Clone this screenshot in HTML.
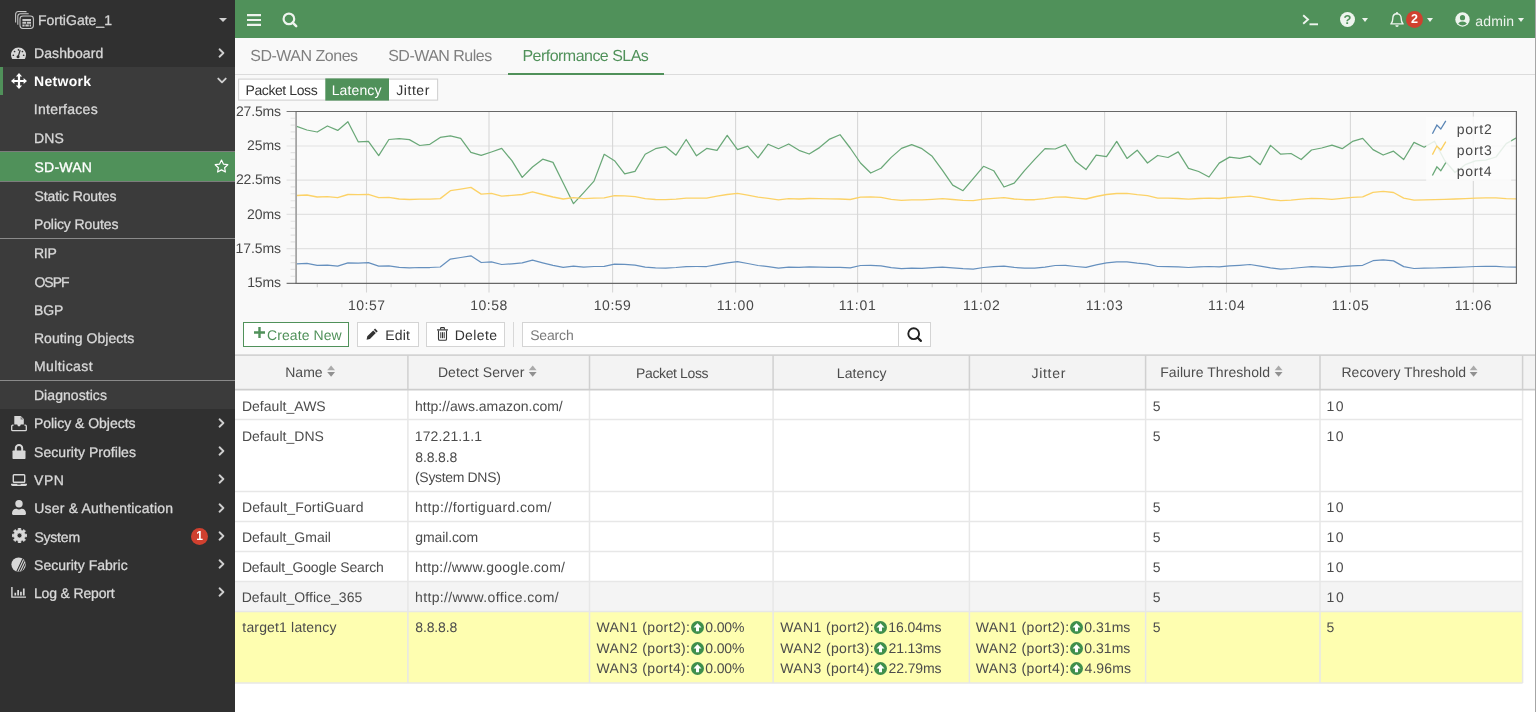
<!DOCTYPE html>
<html lang="en">
<head>
<meta charset="utf-8">
<title>FortiGate_1 - Performance SLAs</title>
<style>
*{box-sizing:border-box;margin:0;padding:0}
html,body{width:1536px;height:712px;overflow:hidden;background:#fff}
body{font-family:"Liberation Sans",sans-serif;font-size:14px;color:#444;position:relative}
svg{display:block}
#side{position:absolute;left:0;top:0;width:235px;height:712px;background:#303030;color:#d8d8d8}
#side .it{position:absolute;left:0;width:235px;height:28px;line-height:28px;white-space:nowrap}
#side .it .tx{position:absolute;left:35px;top:0}
#side .it .ic{position:absolute}
#side .it .ch{position:absolute;left:218.4px;top:8.5px}
#hdr{position:absolute;left:235px;top:0;width:1301px;height:38px;background:#50915a;color:#fff}
#hdr .a{position:absolute;display:block}
#tabs{position:absolute;left:235px;top:38px;width:1301px;height:37px;background:#f9f9f9;border-bottom:1px solid #dcdcdc;font-size:16px;color:#6e6e6e}
#tabs span{position:absolute;top:0;line-height:35px;white-space:nowrap}
#main{position:absolute;left:235px;top:75px;width:1301px;height:637px;background:#f9f9f9}
.btn{position:absolute;top:322px;height:25px;border:1px solid #d4d4d4;background:#fff;line-height:24px;font-size:14px;color:#333;white-space:nowrap}





.t{text-rendering:geometricPrecision;position:absolute;white-space:pre;line-height:20px;height:20px;font-size:14px;color:#4c4c4c}
#txt{position:absolute;left:0;top:0;width:1536px;height:712px;will-change:transform}

</style>
</head>
<body>
<div id="side">
<div class="it" style="top:6px"><span class="ic" style="left:15px;top:5px"><svg width="19" height="18" viewBox="0 0 19 18" style=""><g fill="none" stroke="#c8c8c8" stroke-width="1.050"><path d="M.6 11.5V3.4C.6 1.7 1.7.6 3.4.6H11.5"/><path d="M2.8 13.7V5.6c0-1.7 1.1-2.8 2.8-2.8h8.1"/><rect x="5" y="5" width="13.4" height="12.4" rx="2.9"/></g><path fill="#c8c8c8" d="M7.4 8h8.6v2H7.4zM7.4 10.8h3.8v2H7.4zM12 10.8h4v2h-4zM7.4 13.6h2.2v1.8H7.4zM10.4 13.6h3.4v1.8h-3.4zM14.6 13.6h1.4v1.8h-1.4z"/></svg></span><span style="position:absolute;left:219px;top:12px;border:4px solid transparent;border-top:4.5px solid #d0d0d0;border-bottom:0"></span></div>
<div style="position:absolute;left:0;top:67px;width:235px;height:342px;background:#3b3b3b"></div>
<div style="position:absolute;left:0;top:67px;width:3px;height:28px;background:#50915a"></div>
<div style="position:absolute;left:0;top:151px;width:235px;height:31px;background:#50915a;border-top:1px solid #7c7c7c;border-bottom:1px solid #7c7c7c"></div>
<div style="position:absolute;left:0;top:238px;width:235px;height:1px;background:#8a8a8a"></div>
<div style="position:absolute;left:0;top:380px;width:235px;height:1px;background:#8a8a8a"></div>
<div class="it" style="top:39px;"><span class="ic" style="left:11.2px;top:7.8px"><svg width="15" height="12.2" viewBox="0 0 16 13" style=""><path fill="#d8d8d8" d="M8 .5C3.6.5 0 4 0 8.3c0 1.5.4 2.9 1.1 4.1.2.3.5.4.800.4h12.2c.3 0 .6-.1.8-.4.7-1.2 1.1-2.6 1.1-4.1C16 4 12.4.5 8 .5z"/><circle cx="8" cy="3" r=".9" fill="#303030"/><circle cx="3.8" cy="4.8" r=".9" fill="#303030"/><circle cx="2.5" cy="8.8" r=".9" fill="#303030"/><circle cx="13.5" cy="8.8" r=".9" fill="#303030"/><circle cx="12.2" cy="4.8" r=".9" fill="#303030"/><path d="M7.6 10.5L9.6 3.8" stroke="#303030" stroke-width="1.3" stroke-linecap="round"/><circle cx="7.5" cy="10.3" r="1.6" fill="#303030"/></svg></span><span class="ch"><svg width="7.3" height="10" viewBox="0 0 8 11" style=""><path d="M1.7 1.4L5.9 5.5L1.7 9.6" fill="none" stroke="#d0d0d0" stroke-width="2" stroke-linecap="round" stroke-linejoin="round"/></svg></span></div>
<div class="it" style="top:67px;color:#fff;"><span class="ic" style="left:11px;top:6px"><svg width="16" height="16" viewBox="0 0 16 16" style=""><path fill="#fff" d="M8 0l3.1 3.4H9.1v3.5h3.5V4.9L16 8l-3.4 3.1V9.1H9.1v3.5h2L8 16l-3.1-3.4h2V9.1H3.4v2L0 8l3.4-3.1v2h3.5V3.4h-2z"/></svg></span><span class="ch" style="left:217.1px;top:9.7px"><svg width="10" height="7.3" viewBox="0 0 11 8" style=""><path d="M1.4 1.7L5.5 5.9L9.6 1.7" fill="none" stroke="#d0d0d0" stroke-width="2" stroke-linecap="round" stroke-linejoin="round"/></svg></span></div>
<div class="it" style="top:95.5px;"></div>
<div class="it" style="top:123.5px;"></div>
<div class="it" style="top:152px;color:#fff;"><span class="ch" style="left:214px;top:7px"><svg width="15" height="14" viewBox="0 0 15 14" style=""><path d="M7.5 1.1l1.9 4 4.4.6-3.2 3 .8 4.3-3.9-2.1-3.9 2.1.8-4.3-3.2-3 4.4-.6z" fill="none" stroke="#fff" stroke-width="1.2" stroke-linejoin="round"/></svg></span></div>
<div class="it" style="top:182px;"></div>
<div class="it" style="top:210px;"></div>
<div class="it" style="top:239px;"></div>
<div class="it" style="top:267px;"></div>
<div class="it" style="top:295.5px;"></div>
<div class="it" style="top:324px;"></div>
<div class="it" style="top:352px;"></div>
<div class="it" style="top:381px;"></div>
<div class="it" style="top:409px;"><span class="ic" style="left:11px;top:6.8px"><svg width="16" height="16" viewBox="0 0 16 16" style=""><path fill="#d8d8d8" d="M3.3 0h6.5l3 3v5.5h-3l-.8 1.7H7l-.8-1.7H3.3z"/><path fill="#303030" d="M9.6.6v2.8h2.8z" opacity=".55"/><path fill="none" stroke="#d8d8d8" stroke-width="1.3" d="M2.6 9.2H1.7c-.6 0-1 .4-1 1v3.5c0 .6.4 1 1 1h12.6c.6 0 1-.4 1-1v-3.5c0-.6-.4-1-1-1h-.9"/></svg></span><span class="ch"><svg width="7.3" height="10" viewBox="0 0 8 11" style=""><path d="M1.7 1.4L5.9 5.5L1.7 9.6" fill="none" stroke="#d0d0d0" stroke-width="2" stroke-linecap="round" stroke-linejoin="round"/></svg></span></div>
<div class="it" style="top:437.5px;"><span class="ic" style="left:12px;top:6px"><svg width="14" height="15" viewBox="0 0 14 15" style=""><path fill="#d8d8d8" d="M1.2 6.5h11.6c.4 0 .7.3.7.7v7c0 .4-.3.7-.7.7H1.2c-.4 0-.7-.3-.7-.7v-7c0-.4.3-.7.7-.7z"/><path fill="none" stroke="#d8d8d8" stroke-width="2" d="M3.8 7V4.3a3.2 3.2 0 016.4 0V7"/></svg></span><span class="ch"><svg width="7.3" height="10" viewBox="0 0 8 11" style=""><path d="M1.7 1.4L5.9 5.5L1.7 9.6" fill="none" stroke="#d0d0d0" stroke-width="2" stroke-linecap="round" stroke-linejoin="round"/></svg></span></div>
<div class="it" style="top:465.5px;"><span class="ic" style="left:11px;top:8px"><svg width="16" height="12" viewBox="0 0 16 12" style=""><rect x="2.3" y=".7" width="11.4" height="7.6" rx=".8" fill="none" stroke="#d8d8d8" stroke-width="1.4"/><path fill="#d8d8d8" d="M0 9.8h16v.7c0 .8-.7 1.4-1.5 1.4h-13C.7 11.9 0 11.3 0 10.5z"/><rect x="6.3" y="9.8" width="3.4" height=".8" fill="#303030"/></svg></span><span class="ch"><svg width="7.3" height="10" viewBox="0 0 8 11" style=""><path d="M1.7 1.4L5.9 5.5L1.7 9.6" fill="none" stroke="#d0d0d0" stroke-width="2" stroke-linecap="round" stroke-linejoin="round"/></svg></span></div>
<div class="it" style="top:494px;"><span class="ic" style="left:12px;top:6px"><svg width="14" height="15" viewBox="0 0 14 15" style=""><circle cx="7" cy="3.7" r="3.7" fill="#d8d8d8"/><path fill="#d8d8d8" d="M0 13.5c0-3 1.8-4.7 4.2-4.7h.4c.7.4 1.5.6 2.4.6s1.7-.2 2.4-.6h.4c2.4 0 4.2 1.7 4.2 4.7 0 .8-.6 1.5-1.5 1.5h-11C.6 15 0 14.3 0 13.5z"/></svg></span><span class="ch"><svg width="7.3" height="10" viewBox="0 0 8 11" style=""><path d="M1.7 1.4L5.9 5.5L1.7 9.6" fill="none" stroke="#d0d0d0" stroke-width="2" stroke-linecap="round" stroke-linejoin="round"/></svg></span></div>
<div class="it" style="top:522px;"><span class="ic" style="left:11.5px;top:6px"><svg width="15" height="15" viewBox="0 0 15 15" style=""><path fill="#d8d8d8" stroke="#d8d8d8" stroke-width=".6" stroke-linejoin="round" fill-rule="evenodd" d="M6.17 1.96L6.27 0.10L8.73 0.10L8.83 1.96L10.48 2.64L11.86 1.40L13.60 3.14L12.36 4.52L13.04 6.17L14.90 6.27L14.90 8.73L13.04 8.83L12.36 10.48L13.60 11.86L11.86 13.60L10.48 12.36L8.83 13.04L8.73 14.90L6.27 14.90L6.17 13.04L4.52 12.36L3.14 13.60L1.40 11.86L2.64 10.48L1.96 8.83L0.10 8.73L0.10 6.27L1.96 6.17L2.64 4.52L1.40 3.14L3.14 1.40L4.52 2.64Z M7.5 5.1a2.4 2.4 0 100 4.8a2.4 2.4 0 000-4.8z"/></svg></span><span class="ch"><svg width="7.3" height="10" viewBox="0 0 8 11" style=""><path d="M1.7 1.4L5.9 5.5L1.7 9.6" fill="none" stroke="#d0d0d0" stroke-width="2" stroke-linecap="round" stroke-linejoin="round"/></svg></span><span style="position:absolute;left:191px;top:5.5px;width:17px;height:17px;border-radius:9px;will-change:transform;background:#d0402f;color:#fff;font-weight:bold;font-size:12px;line-height:17px;text-align:center">1</span></div>
<div class="it" style="top:550px;"><span class="ic" style="left:11.2px;top:7px"><svg width="15.2" height="15.2" viewBox="0 0 16 16" style=""><defs><clipPath id="fc"><circle cx="8" cy="8" r="7.6"/></clipPath></defs><circle cx="8" cy="8" r="7.6" fill="#d8d8d8"/><g clip-path="url(#fc)" stroke="#303030" stroke-width="1.1"><path d="M5.5 16.5L12.5 1.5M8 16.5L15 1.5M10.5 16.5L17.5 1.5"/></g></svg></span><span class="ch"><svg width="7.3" height="10" viewBox="0 0 8 11" style=""><path d="M1.7 1.4L5.9 5.5L1.7 9.6" fill="none" stroke="#d0d0d0" stroke-width="2" stroke-linecap="round" stroke-linejoin="round"/></svg></span></div>
<div class="it" style="top:578.5px;"><span class="ic" style="left:11px;top:8px"><svg width="15.4" height="11.3" viewBox="0 0 16 12" style=""><path fill="none" stroke="#d8d8d8" stroke-width="1.5" d="M.8 0v10.8H16"/><path fill="#d8d8d8" d="M3.5 6h1.8v3H3.5zM6.5 3.3h1.8V9H6.5zM9.5 5h1.8v4H9.5zM12.5 1.5h1.8V9h-1.8z"/></svg></span><span class="ch"><svg width="7.3" height="10" viewBox="0 0 8 11" style=""><path d="M1.7 1.4L5.9 5.5L1.7 9.6" fill="none" stroke="#d0d0d0" stroke-width="2" stroke-linecap="round" stroke-linejoin="round"/></svg></span></div>
</div>
<div id="hdr">
<span class="a" style="left:12px;top:14px"><svg width="14" height="12" viewBox="0 0 14 12" style=""><path d="M0 1.2h14M0 6h14M0 10.8h14" stroke="#eef4ee" stroke-width="2.2"/></svg></span>
<span class="a" style="left:47.10000000000002px;top:11.5px"><svg width="16" height="16" viewBox="0 0 16 16" style=""><circle cx="6.9" cy="6.9" r="5.3" fill="none" stroke="#eef4ee" stroke-width="2.2"/><path d="M10.7 10.7L14.2 14.2" stroke="#eef4ee" stroke-width="2.5" stroke-linecap="round"/></svg></span>
<span class="a" style="left:1067px;top:14px"><svg width="17" height="12" viewBox="0 0 17 12" style=""><path d="M1.2 1.2L6 5.5L1.2 9.8" fill="none" stroke="#eef4ee" stroke-width="1.9"/><path d="M7.5 10.3H16" stroke="#eef4ee" stroke-width="1.9"/></svg></span>
<span class="a" style="left:1105.3px;top:12.3px"><span style="display:block;width:15px;height:15px;border-radius:8px;will-change:transform;background:#eef4ee;color:#50915a;font-weight:bold;font-size:13px;line-height:15.5px;text-align:center">?</span></span>
<span class="a" style="left:1126.5px;top:18px"><span style="display:block;border:3.5px solid transparent;border-top:4px solid #eef4ee;border-bottom:0"></span></span>
<span class="a" style="left:1154.5px;top:11.5px"><svg width="14" height="16" viewBox="0 0 14 16" style=""><path d="M7 1.8c-2.6 0-4.2 2-4.2 4.6 0 3.3-1 4.6-1.9 5.5h12.2c-.9-.9-1.9-2.2-1.9-5.5 0-2.6-1.6-4.6-4.2-4.6z" fill="none" stroke="#eef4ee" stroke-width="1.4" stroke-linejoin="round"/><path d="M7 .3v1.5" stroke="#eef4ee" stroke-width="1.6" stroke-linecap="round"/><path d="M5.3 13.3a1.7 1.7 0 003.4 0z" fill="#eef4ee"/></svg></span>
<span class="a" style="left:1170.5px;top:11.2px"><span style="display:block;width:17px;height:17px;border-radius:9px;will-change:transform;background:#d0402f;color:#fff;font-weight:bold;font-size:12.5px;line-height:17px;text-align:center">2</span></span>
<span class="a" style="left:1192px;top:18px"><span style="display:block;border:3.5px solid transparent;border-top:4px solid #eef4ee;border-bottom:0"></span></span>
<span class="a" style="left:1220px;top:12.3px"><svg width="15" height="15" viewBox="0 0 15 15" style=""><defs><clipPath id="uc"><circle cx="7.5" cy="7.5" r="5.9"/></clipPath></defs><circle cx="7.5" cy="7.5" r="7.2" fill="#eef4ee"/><circle cx="7.5" cy="5.7" r="2.6" fill="#50915a"/><ellipse cx="7.5" cy="13.2" rx="4.7" ry="3.7" fill="#50915a" clip-path="url(#uc)"/></svg></span>
<span class="a" style="left:1283.3px;top:18px"><span style="display:block;border:3.5px solid transparent;border-top:4px solid #eef4ee;border-bottom:0"></span></span>
</div>
<div id="tabs">
<div style="position:absolute;left:272.5px;top:35px;width:156px;height:2px;background:#50915a"></div>
</div>
<div id="main"></div>
<svg width="210" height="30" viewBox="235 75 210 30" style="position:absolute;left:235px;top:75px"><rect x="238.6" y="79.1" width="199" height="21" fill="#fff" stroke="#d2d2d2" stroke-width="1.1"/><rect x="325.3" y="78.4" width="63.7" height="22.2" fill="#50915a"/></svg>
<svg id="chart" width="1301" height="215" viewBox="235 100 1301 215" style="position:absolute;left:235px;top:100px;font-family:'Liberation Sans',sans-serif;font-size:14px">
<rect x="296.0" y="111.3" width="1220.6" height="171.9" fill="#fafafa"/>
<path d="M290.6 118.2h4.6M290.6 125.1h4.6M290.6 131.9h4.6M290.6 138.8h4.6M290.6 152.6h4.6M290.6 159.4h4.6M290.6 166.3h4.6M290.6 173.2h4.6M290.6 186.9h4.6M290.6 193.8h4.6M290.6 200.7h4.6M290.6 207.6h4.6M290.6 221.3h4.6M290.6 228.2h4.6M290.6 235.1h4.6M290.6 241.9h4.6M290.6 255.7h4.6M290.6 262.6h4.6M290.6 269.4h4.6M290.6 276.3h4.6" stroke="#e2e2e2" stroke-width="1.1" fill="none"/>
<path d="M286.6 146.0H1516.6M286.6 180.2H1516.6M286.6 214.4H1516.6M286.6 248.6H1516.6" stroke="#e2e2e2" stroke-width="1.2" fill="none"/>
<path d="M366.5 111.3V292.5M489.0 111.3V292.5M612.6 111.3V292.5M735.6 111.3V292.5M857.6 111.3V292.5M981.5 111.3V292.5M1104.6 111.3V292.5M1226.5 111.3V292.5M1350.4 111.3V292.5M1473.3 111.3V292.5" stroke="#d6d6d6" stroke-width="1.05" fill="none"/>
<path d="M317.3 283.2v4M341.9 283.2v4M391.1 283.2v4M415.7 283.2v4M440.3 283.2v4M464.9 283.2v4M514.1 283.2v4M538.7 283.2v4M563.3 283.2v4M587.9 283.2v4M637.1 283.2v4M661.7 283.2v4M686.2 283.2v4M710.8 283.2v4M760.0 283.2v4M784.6 283.2v4M809.2 283.2v4M833.8 283.2v4M883.0 283.2v4M907.6 283.2v4M932.2 283.2v4M956.8 283.2v4M1006.0 283.2v4M1030.6 283.2v4M1055.2 283.2v4M1079.8 283.2v4M1129.0 283.2v4M1153.6 283.2v4M1178.2 283.2v4M1202.8 283.2v4M1252.0 283.2v4M1276.6 283.2v4M1301.1 283.2v4M1325.7 283.2v4M1374.9 283.2v4M1399.5 283.2v4M1424.1 283.2v4M1448.7 283.2v4M1497.9 283.2v4" stroke="#d0d0d0" stroke-width="1.1" fill="none"/>
<polyline points="296.7,126.3 306.9,130.0 317.2,132.0 327.4,126.0 337.7,130.4 347.9,121.7 358.2,141.8 368.4,141.4 378.7,155.6 388.9,139.5 399.2,138.7 409.4,139.6 419.7,145.5 429.9,144.3 440.2,137.4 450.4,135.8 460.7,138.4 470.9,152.3 481.2,155.4 491.4,152.0 501.7,148.4 511.9,160.7 522.2,177.4 532.5,167.0 542.7,159.2 553.0,162.4 563.2,183.0 573.5,203.7 583.7,192.7 594.0,181.1 604.2,154.3 614.5,160.7 624.7,173.9 635.0,171.4 645.2,154.3 655.5,148.7 665.7,146.7 676.0,155.2 686.2,139.5 696.5,155.8 706.7,148.4 717.0,150.3 727.2,135.3 737.5,149.6 747.7,146.2 758.0,157.9 768.2,144.2 778.5,148.7 788.7,144.0 799.0,150.3 809.2,154.0 819.5,147.6 829.7,139.1 840.0,134.7 850.2,148.0 860.5,163.0 870.7,173.0 881.0,168.2 891.2,157.4 901.5,148.4 911.7,144.6 922.0,148.7 932.2,156.3 942.5,170.4 952.7,185.1 963.0,190.7 973.2,178.7 983.5,166.3 993.7,170.7 1004.0,187.0 1014.2,183.1 1024.5,170.7 1034.7,159.4 1045.0,148.6 1055.2,149.0 1065.5,144.7 1075.7,161.6 1086.0,169.6 1096.2,155.2 1106.5,156.7 1116.7,141.4 1127.0,158.4 1137.2,150.2 1147.5,163.0 1157.7,155.5 1168.0,157.5 1178.2,151.9 1188.5,168.3 1198.7,171.5 1209.0,177.0 1219.2,163.1 1229.5,157.1 1239.7,158.4 1250.0,156.2 1260.2,164.7 1270.5,145.4 1280.7,154.2 1291.0,153.5 1301.2,159.5 1311.5,150.0 1321.7,148.0 1332.0,145.2 1342.2,148.7 1352.5,141.4 1362.7,138.4 1373.0,149.6 1383.2,155.0 1393.5,151.2 1403.7,159.5 1414.0,142.4 1424.2,147.2 1434.5,141.2 1444.7,160.5 1455.0,172.5 1465.2,164.7 1475.5,160.9 1485.7,160.2 1496.0,157.0 1506.2,143.6 1516.5,137.7" fill="none" stroke="#6aa878" stroke-width="1.25" stroke-linejoin="round"/>
<polyline points="296.7,195.5 306.9,195.0 317.2,197.0 327.4,196.7 337.7,197.7 347.9,194.5 358.2,194.7 368.4,194.3 378.7,197.7 388.9,197.4 399.2,199.0 409.4,199.5 419.7,199.1 429.9,199.1 440.2,198.6 450.4,190.7 460.7,189.1 470.9,187.4 481.2,194.1 491.4,193.4 501.7,196.1 511.9,195.4 522.2,194.5 532.5,191.8 542.7,194.5 553.0,197.0 563.2,199.0 573.5,197.7 583.7,198.7 594.0,198.1 604.2,197.9 614.5,195.7 624.7,195.9 635.0,196.7 645.2,198.7 655.5,199.5 665.7,199.7 676.0,199.1 686.2,198.2 696.5,198.1 706.7,198.1 717.0,196.2 727.2,194.5 737.5,193.3 747.7,195.1 758.0,197.1 768.2,198.3 778.5,199.8 788.7,198.7 799.0,199.0 809.2,198.5 819.5,198.7 829.7,198.9 840.0,199.0 850.2,199.5 860.5,197.1 870.7,196.9 881.0,197.4 891.2,199.3 901.5,200.3 911.7,199.8 922.0,199.9 932.2,199.3 942.5,198.7 952.7,199.5 963.0,200.3 973.2,200.7 983.5,199.1 993.7,198.3 1004.0,197.7 1014.2,199.0 1024.5,199.7 1034.7,199.7 1045.0,198.7 1055.2,197.1 1065.5,197.0 1075.7,198.1 1086.0,199.0 1096.2,196.5 1106.5,194.5 1116.7,193.5 1127.0,193.4 1137.2,194.7 1147.5,195.7 1157.7,198.1 1168.0,198.2 1178.2,198.5 1188.5,199.1 1198.7,198.5 1209.0,198.1 1219.2,198.5 1229.5,197.5 1239.7,196.9 1250.0,196.1 1260.2,197.7 1270.5,199.5 1280.7,200.7 1291.0,200.1 1301.2,199.1 1311.5,198.3 1321.7,198.7 1332.0,199.3 1342.2,198.3 1352.5,197.4 1362.7,196.9 1373.0,192.3 1383.2,191.4 1393.5,192.5 1403.7,198.2 1414.0,200.1 1424.2,199.8 1434.5,199.6 1444.7,199.3 1455.0,199.0 1465.2,198.6 1475.5,198.1 1485.7,197.9 1496.0,197.9 1506.2,198.6 1516.5,198.8" fill="none" stroke="#fcd267" stroke-width="1.35" stroke-linejoin="round"/>
<polyline points="296.7,263.9 306.9,263.4 317.2,265.4 327.4,265.1 337.7,266.1 347.9,262.9 358.2,263.1 368.4,262.7 378.7,266.1 388.9,265.8 399.2,267.4 409.4,267.9 419.7,267.5 429.9,267.5 440.2,267.0 450.4,259.1 460.7,257.5 470.9,255.8 481.2,262.5 491.4,261.8 501.7,264.5 511.9,263.8 522.2,262.9 532.5,260.2 542.7,262.9 553.0,265.4 563.2,267.4 573.5,266.1 583.7,267.1 594.0,266.5 604.2,266.3 614.5,264.1 624.7,264.3 635.0,265.1 645.2,267.1 655.5,267.9 665.7,268.1 676.0,267.5 686.2,266.6 696.5,266.5 706.7,266.5 717.0,264.6 727.2,262.9 737.5,261.7 747.7,263.5 758.0,265.5 768.2,266.7 778.5,268.2 788.7,267.1 799.0,267.4 809.2,266.9 819.5,267.1 829.7,267.3 840.0,267.4 850.2,267.9 860.5,265.5 870.7,265.3 881.0,265.8 891.2,267.7 901.5,268.7 911.7,268.2 922.0,268.3 932.2,267.7 942.5,267.1 952.7,267.9 963.0,268.7 973.2,269.1 983.5,267.5 993.7,266.7 1004.0,266.1 1014.2,267.4 1024.5,268.1 1034.7,268.1 1045.0,267.1 1055.2,265.5 1065.5,265.4 1075.7,266.5 1086.0,267.4 1096.2,264.9 1106.5,262.9 1116.7,261.9 1127.0,261.8 1137.2,263.1 1147.5,264.1 1157.7,266.5 1168.0,266.6 1178.2,266.9 1188.5,267.5 1198.7,266.9 1209.0,266.5 1219.2,266.9 1229.5,265.9 1239.7,265.3 1250.0,264.5 1260.2,266.1 1270.5,267.9 1280.7,269.1 1291.0,268.5 1301.2,267.5 1311.5,266.7 1321.7,267.1 1332.0,267.7 1342.2,266.7 1352.5,265.8 1362.7,265.3 1373.0,260.7 1383.2,259.8 1393.5,260.9 1403.7,266.6 1414.0,268.5 1424.2,268.2 1434.5,268.0 1444.7,267.7 1455.0,267.4 1465.2,267.0 1475.5,266.5 1485.7,266.3 1496.0,266.3 1506.2,267.0 1516.5,267.2" fill="none" stroke="#6690be" stroke-width="1.25" stroke-linejoin="round"/>
<path d="M286.6 111.5H296.0M286.6 283.4H296.0" stroke="#777" stroke-width="1.1" fill="none"/>
<path d="M296.1 111.3V283.2" stroke="#a0a0a0" stroke-width="1.7" fill="none"/>
<path d="M295.2 111.5H1516.4V283.4H295.2" stroke="#676767" stroke-width="1.15" fill="none"/>
<rect x="1426.2" y="116.5" width="85" height="64.5" fill="#fcfcfc" fill-opacity="0.85"/>
<path d="M1432.4 133.7L1436.9 125.1L1440.8 129.0L1445.8 120.8" stroke="#5b86b5" stroke-width="1.3" fill="none"/>
<path d="M1432.4 154.6L1436.9 146.0L1440.8 149.9L1445.8 141.7" stroke="#fbcf5e" stroke-width="1.3" fill="none"/>
<path d="M1432.4 175.5L1436.9 166.9L1440.8 170.8L1445.8 162.6" stroke="#6aa878" stroke-width="1.3" fill="none"/>
</svg>
<div class="btn" style="left:243px;width:106px;border-color:#50915a;color:#50915a"><span style="position:absolute;left:9.6px;top:4.3px"><svg width="11" height="11" viewBox="0 0 12 12" style=""><path d="M6 0v12M0 6h12" stroke="#50915a" stroke-width="2.6"/></svg></span></div>
<div class="btn" style="left:357px;width:61.5px"><span style="position:absolute;left:8.3px;top:5px"><svg width="12.5" height="12" viewBox="0 0 14 14" style=""><path fill="#333" d="M10.3.6l3.1 3.1-1.5 1.5-3.1-3.1zM8.1 2.8l3.1 3.1-6.9 6.9-3.9.8.8-3.9z"/></svg></span></div>
<div class="btn" style="left:425.5px;width:79px"><span style="position:absolute;left:10.2px;top:3.6px"><svg width="11" height="14" viewBox="0 0 11 14" style=""><path fill="none" stroke="#333" stroke-width="1.1" d="M1.5 3.5v8.5c0 .8.5 1.3 1.3 1.3h5.4c.8 0 1.3-.5 1.3-1.3V3.5"/><path stroke="#333" stroke-width="1.2" d="M0 2.9h11"/><path fill="none" stroke="#333" stroke-width="1.1" d="M3.6 2.6V1.3c0-.4.3-.7.7-.7h2.4c.4 0 .7.3.7.7v1.3"/><path stroke="#333" stroke-width="1" d="M3.8 5.2v6M5.5 5.2v6M7.2 5.2v6"/></svg></span></div>
<div style="position:absolute;left:513px;top:322px;width:1px;height:25px;background:#d8d8d8"></div>
<div class="btn" style="left:522px;width:377px;color:#777"></div>
<div class="btn" style="left:898px;width:33px"><span style="position:absolute;left:7.8px;top:3.7px"><svg width="16" height="16" viewBox="0 0 16 16" style=""><circle cx="6.7" cy="6.7" r="5.4" fill="none" stroke="#222" stroke-width="1.9"/><path d="M10.7 10.7L13.9 13.9" stroke="#222" stroke-width="2.2" stroke-linecap="round"/></svg></span></div>
<svg width="1301" height="359" viewBox="235 353 1301 359" style="position:absolute;left:235px;top:353px">
<rect x="235" y="353" width="1301" height="359" fill="#fff"/>
<rect x="235" y="353" width="1301" height="2" fill="#f9f9f9"/>
<rect x="235" y="355.1" width="1301" height="34.5" fill="#f3f3f3"/>
<path d="M235 355.1H1536" stroke="#d3d3d3" stroke-width="1.6"/>
<rect x="235" y="581.5" width="1287.6" height="29.9" fill="#f4f4f4"/>
<rect x="235" y="611.4" width="1287.6" height="71.7" fill="#fefeb0"/>
<path d="M235 419.6H1522.6M235 491.4H1522.6M235 521.5H1522.6M235 551.5H1522.6M235 581.5H1522.6M235 611.4H1522.6M235 683.1H1522.6" stroke="#e7e7e7" stroke-width="1.5" fill="none"/>
<path d="M407.9 389.6V683.1M589.5 389.6V683.1M773.1 389.6V683.1M969.4 389.6V683.1M1145.6 389.6V683.1M1320.0 389.6V683.1M1522.6 389.6V683.1" stroke="#e7e7e7" stroke-width="1.5" fill="none"/>
<path d="M407.9 355.1V389.6M589.5 355.1V389.6M773.1 355.1V389.6M969.4 355.1V389.6M1145.6 355.1V389.6M1320.0 355.1V389.6M1522.6 355.1V389.6" stroke="#d0d0d0" stroke-width="1.5" fill="none"/>
<path d="M235 389.6H1536" stroke="#cdcdcd" stroke-width="1.7"/>
<path d="M327.2 370.2l3.9 -4.7l3.9 4.7z" fill="#aaa"/><path d="M327.2 372l3.9 4.7l3.9 -4.7z" fill="#909090"/>
<path d="M528.8 370.2l3.9 -4.7l3.9 4.7z" fill="#aaa"/><path d="M528.8 372l3.9 4.7l3.9 -4.7z" fill="#909090"/>
<path d="M1274.7 370.2l3.9 -4.7l3.9 4.7z" fill="#aaa"/><path d="M1274.7 372l3.9 4.7l3.9 -4.7z" fill="#909090"/>
<path d="M1469.7 370.2l3.9 -4.7l3.9 4.7z" fill="#aaa"/><path d="M1469.7 372l3.9 4.7l3.9 -4.7z" fill="#909090"/>
</svg>
<span style="position:absolute;left:690.7px;top:621.4px"><svg width="13" height="13" viewBox="0 0 13 13" style=""><circle cx="6.5" cy="6.5" r="6.5" fill="#3f8f4c"/><path fill="#fff" d="M6.5 2.3l4 4.1H8v3.8H5V6.4H2.5z"/></svg></span>
<span style="position:absolute;left:690.7px;top:641.9px"><svg width="13" height="13" viewBox="0 0 13 13" style=""><circle cx="6.5" cy="6.5" r="6.5" fill="#3f8f4c"/><path fill="#fff" d="M6.5 2.3l4 4.1H8v3.8H5V6.4H2.5z"/></svg></span>
<span style="position:absolute;left:690.7px;top:662.4px"><svg width="13" height="13" viewBox="0 0 13 13" style=""><circle cx="6.5" cy="6.5" r="6.5" fill="#3f8f4c"/><path fill="#fff" d="M6.5 2.3l4 4.1H8v3.8H5V6.4H2.5z"/></svg></span>
<span style="position:absolute;left:874.3px;top:621.4px"><svg width="13" height="13" viewBox="0 0 13 13" style=""><circle cx="6.5" cy="6.5" r="6.5" fill="#3f8f4c"/><path fill="#fff" d="M6.5 2.3l4 4.1H8v3.8H5V6.4H2.5z"/></svg></span>
<span style="position:absolute;left:874.3px;top:641.9px"><svg width="13" height="13" viewBox="0 0 13 13" style=""><circle cx="6.5" cy="6.5" r="6.5" fill="#3f8f4c"/><path fill="#fff" d="M6.5 2.3l4 4.1H8v3.8H5V6.4H2.5z"/></svg></span>
<span style="position:absolute;left:874.3px;top:662.4px"><svg width="13" height="13" viewBox="0 0 13 13" style=""><circle cx="6.5" cy="6.5" r="6.5" fill="#3f8f4c"/><path fill="#fff" d="M6.5 2.3l4 4.1H8v3.8H5V6.4H2.5z"/></svg></span>
<span style="position:absolute;left:1069.8px;top:621.4px"><svg width="13" height="13" viewBox="0 0 13 13" style=""><circle cx="6.5" cy="6.5" r="6.5" fill="#3f8f4c"/><path fill="#fff" d="M6.5 2.3l4 4.1H8v3.8H5V6.4H2.5z"/></svg></span>
<span style="position:absolute;left:1069.8px;top:641.9px"><svg width="13" height="13" viewBox="0 0 13 13" style=""><circle cx="6.5" cy="6.5" r="6.5" fill="#3f8f4c"/><path fill="#fff" d="M6.5 2.3l4 4.1H8v3.8H5V6.4H2.5z"/></svg></span>
<span style="position:absolute;left:1069.8px;top:662.4px"><svg width="13" height="13" viewBox="0 0 13 13" style=""><circle cx="6.5" cy="6.5" r="6.5" fill="#3f8f4c"/><path fill="#fff" d="M6.5 2.3l4 4.1H8v3.8H5V6.4H2.5z"/></svg></span>
<div id="txt"><span id="t0" class="t" style="left:37.95px;top:10.00px;letter-spacing:0.008px;-webkit-text-stroke:.3px;color:#d4d4d4;">FortiGate_1</span>
<span id="t1" class="t" style="left:33.95px;top:43.00px;letter-spacing:0.103px;-webkit-text-stroke:.3px;color:#d8d8d8;">Dashboard</span>
<span id="t2" class="t" style="left:33.94px;top:71.00px;letter-spacing:0.330px;font-weight:bold;color:#fff;">Network</span>
<span id="t3" class="t" style="left:33.78px;top:99.00px;letter-spacing:0.269px;-webkit-text-stroke:.3px;color:#d8d8d8;">Interfaces</span>
<span id="t4" class="t" style="left:33.95px;top:128.00px;letter-spacing:0.124px;-webkit-text-stroke:.3px;color:#d8d8d8;">DNS</span>
<span id="t5" class="t" style="left:34.47px;top:157.00px;letter-spacing:0.235px;-webkit-text-stroke:.3px;color:#fff;">SD-WAN</span>
<span id="t6" class="t" style="left:34.52px;top:186.00px;letter-spacing:-0.113px;-webkit-text-stroke:.3px;color:#d8d8d8;">Static Routes</span>
<span id="t7" class="t" style="left:33.95px;top:214.00px;letter-spacing:-0.096px;-webkit-text-stroke:.3px;color:#d8d8d8;">Policy Routes</span>
<span id="t8" class="t" style="left:33.95px;top:243.00px;letter-spacing:-0.253px;-webkit-text-stroke:.3px;color:#d8d8d8;">RIP</span>
<span id="t9" class="t" style="left:34.41px;top:272.00px;letter-spacing:-0.965px;-webkit-text-stroke:.3px;color:#d8d8d8;">OSPF</span>
<span id="t10" class="t" style="left:33.95px;top:300.00px;letter-spacing:-0.062px;-webkit-text-stroke:.3px;color:#d8d8d8;">BGP</span>
<span id="t11" class="t" style="left:33.95px;top:328.00px;letter-spacing:0.053px;-webkit-text-stroke:.3px;color:#d8d8d8;">Routing Objects</span>
<span id="t12" class="t" style="left:33.95px;top:356.00px;letter-spacing:0.434px;-webkit-text-stroke:.3px;color:#d8d8d8;">Multicast</span>
<span id="t13" class="t" style="left:33.95px;top:385.00px;letter-spacing:0.063px;-webkit-text-stroke:.3px;color:#d8d8d8;">Diagnostics</span>
<span id="t14" class="t" style="left:33.95px;top:413.00px;letter-spacing:-0.020px;-webkit-text-stroke:.3px;color:#d8d8d8;">Policy &amp; Objects</span>
<span id="t15" class="t" style="left:34.05px;top:442.00px;letter-spacing:0.046px;-webkit-text-stroke:.3px;color:#d8d8d8;">Security Profiles</span>
<span id="t16" class="t" style="left:34.02px;top:470.00px;letter-spacing:0.536px;-webkit-text-stroke:.3px;color:#d8d8d8;">VPN</span>
<span id="t17" class="t" style="left:34.15px;top:498.00px;letter-spacing:0.213px;-webkit-text-stroke:.3px;color:#d8d8d8;">User &amp; Authentication</span>
<span id="t18" class="t" style="left:34.41px;top:527.00px;letter-spacing:-0.208px;-webkit-text-stroke:.3px;color:#d8d8d8;">System</span>
<span id="t19" class="t" style="left:34.05px;top:555.00px;letter-spacing:0.020px;-webkit-text-stroke:.3px;color:#d8d8d8;">Security Fabric</span>
<span id="t20" class="t" style="left:33.95px;top:583.00px;letter-spacing:-0.158px;-webkit-text-stroke:.3px;color:#d8d8d8;">Log &amp; Report</span>
<span id="t21" class="t" style="left:1475.31px;top:11.00px;letter-spacing:0.140px;color:#eef4ee;">admin</span>
<span id="t22" class="t" style="left:250.20px;top:46.50px;letter-spacing:-0.483px;font-size:16px;color:#808080;">SD-WAN Zones</span>
<span id="t23" class="t" style="left:388.20px;top:46.50px;letter-spacing:-0.513px;font-size:16px;color:#808080;">SD-WAN Rules</span>
<span id="t24" class="t" style="left:522.40px;top:46.50px;letter-spacing:-0.523px;font-size:16px;color:#50915a;">Performance SLAs</span>
<span id="t25" class="t" style="left:245.48px;top:80.00px;letter-spacing:-0.404px;color:#333;">Packet Loss</span>
<span id="t26" class="t" style="left:331.65px;top:80.00px;letter-spacing:0.135px;color:#fff;">Latency</span>
<span id="t27" class="t" style="left:396.32px;top:80.00px;letter-spacing:0.528px;color:#333;">Jitter</span>
<span id="t28" class="t" style="left:266.98px;top:325.00px;letter-spacing:0.089px;color:#50915a;">Create New</span>
<span id="t29" class="t" style="left:385.29px;top:325.00px;letter-spacing:0.199px;color:#333;">Edit</span>
<span id="t30" class="t" style="left:454.63px;top:325.00px;letter-spacing:0.375px;color:#333;">Delete</span>
<span id="t31" class="t" style="left:530.13px;top:325.00px;letter-spacing:-0.164px;color:#7a7a7a;">Search</span>
<span id="t32" class="t" style="left:285.27px;top:362.00px;letter-spacing:-0.008px;">Name</span>
<span id="t33" class="t" style="left:437.92px;top:362.00px;letter-spacing:0.075px;">Detect Server</span>
<span id="t34" class="t" style="left:636.01px;top:363.00px;letter-spacing:-0.374px;">Packet Loss</span>
<span id="t35" class="t" style="left:836.84px;top:363.00px;letter-spacing:0.109px;">Latency</span>
<span id="t36" class="t" style="left:1031.41px;top:363.00px;letter-spacing:0.721px;">Jitter</span>
<span id="t37" class="t" style="left:1160.22px;top:362.00px;letter-spacing:0.070px;">Failure Threshold</span>
<span id="t38" class="t" style="left:1341.56px;top:362.00px;letter-spacing:-0.033px;">Recovery Threshold</span>
<span id="t39" class="t" style="left:241.88px;top:396.00px;letter-spacing:0.032px;">Default_AWS</span>
<span id="t40" class="t" style="left:415.02px;top:396.00px;letter-spacing:-0.005px;">http://aws.amazon.com/</span>
<span id="t41" class="t" style="left:1152.71px;top:396.00px;">5</span>
<span id="t42" class="t" style="left:1326.44px;top:396.00px;letter-spacing:1.621px;">10</span>
<span id="t43" class="t" style="left:241.88px;top:426.00px;letter-spacing:0.034px;">Default_DNS</span>
<span id="t44" class="t" style="left:414.83px;top:426.00px;letter-spacing:0.111px;">172.21.1.1</span>
<span id="t45" class="t" style="left:415.25px;top:447.00px;letter-spacing:-0.136px;">8.8.8.8</span>
<span id="t46" class="t" style="left:415.05px;top:467.00px;letter-spacing:-0.335px;">(System DNS)</span>
<span id="t47" class="t" style="left:1152.71px;top:426.00px;">5</span>
<span id="t48" class="t" style="left:1326.44px;top:426.00px;letter-spacing:1.621px;">10</span>
<span id="t49" class="t" style="left:241.88px;top:497.00px;letter-spacing:0.149px;">Default_FortiGuard</span>
<span id="t50" class="t" style="left:415.02px;top:497.00px;letter-spacing:0.382px;">http://fortiguard.com/</span>
<span id="t51" class="t" style="left:1152.71px;top:497.00px;">5</span>
<span id="t52" class="t" style="left:1326.44px;top:497.00px;letter-spacing:1.621px;">10</span>
<span id="t53" class="t" style="left:241.88px;top:527.00px;letter-spacing:0.031px;">Default_Gmail</span>
<span id="t54" class="t" style="left:415.27px;top:527.00px;letter-spacing:-0.108px;">gmail.com</span>
<span id="t55" class="t" style="left:1152.71px;top:527.00px;">5</span>
<span id="t56" class="t" style="left:1326.44px;top:527.00px;letter-spacing:1.621px;">10</span>
<span id="t57" class="t" style="left:241.88px;top:557.00px;letter-spacing:-0.183px;">Default_Google Search</span>
<span id="t58" class="t" style="left:415.03px;top:557.00px;letter-spacing:0.247px;">http://www.google.com/</span>
<span id="t59" class="t" style="left:1152.71px;top:557.00px;">5</span>
<span id="t60" class="t" style="left:1326.44px;top:557.00px;letter-spacing:1.621px;">10</span>
<span id="t61" class="t" style="left:241.65px;top:587.00px;letter-spacing:0.065px;">Default_Office_365</span>
<span id="t62" class="t" style="left:415.02px;top:587.00px;letter-spacing:0.369px;">http://www.office.com/</span>
<span id="t63" class="t" style="left:1152.73px;top:587.00px;">5</span>
<span id="t64" class="t" style="left:1326.46px;top:587.00px;letter-spacing:1.657px;">10</span>
<span id="t65" class="t" style="left:242.36px;top:617.00px;letter-spacing:0.159px;">target1 latency</span>
<span id="t66" class="t" style="left:415.29px;top:617.00px;letter-spacing:-0.153px;">8.8.8.8</span>
<span id="t67" class="t" style="left:1152.71px;top:617.00px;">5</span>
<span id="t68" class="t" style="left:1326.61px;top:617.00px;">5</span>
<span id="t69" class="t" style="left:596.53px;top:617.00px;letter-spacing:0.379px;">WAN1 (port2):</span>
<span id="t70" class="t" style="left:705.26px;top:617.00px;letter-spacing:-0.123px;">0.00%</span>
<span id="t71" class="t" style="left:596.53px;top:638.00px;letter-spacing:0.379px;">WAN2 (port3):</span>
<span id="t72" class="t" style="left:705.26px;top:638.00px;letter-spacing:-0.123px;">0.00%</span>
<span id="t73" class="t" style="left:596.53px;top:658.00px;letter-spacing:0.379px;">WAN3 (port4):</span>
<span id="t74" class="t" style="left:705.26px;top:658.00px;letter-spacing:-0.123px;">0.00%</span>
<span id="t75" class="t" style="left:780.25px;top:617.00px;letter-spacing:0.370px;">WAN1 (port2):</span>
<span id="t76" class="t" style="left:888.26px;top:617.00px;letter-spacing:-0.082px;">16.04ms</span>
<span id="t77" class="t" style="left:780.25px;top:638.00px;letter-spacing:0.370px;">WAN2 (port3):</span>
<span id="t78" class="t" style="left:888.62px;top:638.00px;letter-spacing:-0.187px;">21.13ms</span>
<span id="t79" class="t" style="left:780.25px;top:658.00px;letter-spacing:0.370px;">WAN3 (port4):</span>
<span id="t80" class="t" style="left:888.62px;top:658.00px;letter-spacing:-0.132px;">22.79ms</span>
<span id="t81" class="t" style="left:975.74px;top:617.00px;letter-spacing:0.378px;">WAN1 (port2):</span>
<span id="t82" class="t" style="left:1084.30px;top:617.00px;letter-spacing:0.032px;">0.31ms</span>
<span id="t83" class="t" style="left:975.74px;top:638.00px;letter-spacing:0.378px;">WAN2 (port3):</span>
<span id="t84" class="t" style="left:1084.30px;top:638.00px;letter-spacing:0.032px;">0.31ms</span>
<span id="t85" class="t" style="left:975.74px;top:658.00px;letter-spacing:0.378px;">WAN3 (port4):</span>
<span id="t86" class="t" style="left:1084.50px;top:658.00px;letter-spacing:0.099px;">4.96ms</span>
<span id="t87" class="t" style="left:236.02px;top:101.00px;letter-spacing:-0.192px;color:#484848;">27.5ms</span>
<span id="t88" class="t" style="left:247.05px;top:135.00px;letter-spacing:-0.074px;color:#484848;">25ms</span>
<span id="t89" class="t" style="left:236.02px;top:169.00px;letter-spacing:-0.192px;color:#484848;">22.5ms</span>
<span id="t90" class="t" style="left:247.05px;top:204.00px;letter-spacing:-0.074px;color:#484848;">20ms</span>
<span id="t91" class="t" style="left:235.55px;top:238.00px;letter-spacing:-0.081px;color:#484848;">17.5ms</span>
<span id="t92" class="t" style="left:247.18px;top:272.00px;letter-spacing:-0.154px;color:#484848;">15ms</span>
<span id="t93" class="t" style="left:347.96px;top:295.00px;letter-spacing:0.519px;color:#484848;">10:57</span>
<span id="t94" class="t" style="left:470.23px;top:295.00px;letter-spacing:0.506px;color:#484848;">10:58</span>
<span id="t95" class="t" style="left:593.84px;top:295.00px;letter-spacing:0.495px;color:#484848;">10:59</span>
<span id="t96" class="t" style="left:716.84px;top:295.00px;letter-spacing:0.741px;color:#484848;">11:00</span>
<span id="t97" class="t" style="left:838.84px;top:295.00px;letter-spacing:0.745px;color:#484848;">11:01</span>
<span id="t98" class="t" style="left:962.96px;top:295.00px;letter-spacing:0.718px;color:#484848;">11:02</span>
<span id="t99" class="t" style="left:1085.84px;top:295.00px;letter-spacing:0.767px;color:#484848;">11:03</span>
<span id="t100" class="t" style="left:1207.96px;top:295.00px;letter-spacing:0.724px;color:#484848;">11:04</span>
<span id="t101" class="t" style="left:1331.82px;top:295.00px;letter-spacing:0.718px;color:#484848;">11:05</span>
<span id="t102" class="t" style="left:1454.67px;top:295.00px;letter-spacing:0.715px;color:#484848;">11:06</span>
<span id="t103" class="t" style="left:1456.78px;top:119.00px;letter-spacing:0.752px;color:#484848;">port2</span>
<span id="t104" class="t" style="left:1456.78px;top:140.00px;letter-spacing:0.771px;color:#484848;">port3</span>
<span id="t105" class="t" style="left:1456.77px;top:161.00px;letter-spacing:0.704px;color:#484848;">port4</span></div>
<div style="position:absolute;left:1535px;top:0;width:1px;height:712px;background:#a6a6a6"></div>
</body>
</html>
